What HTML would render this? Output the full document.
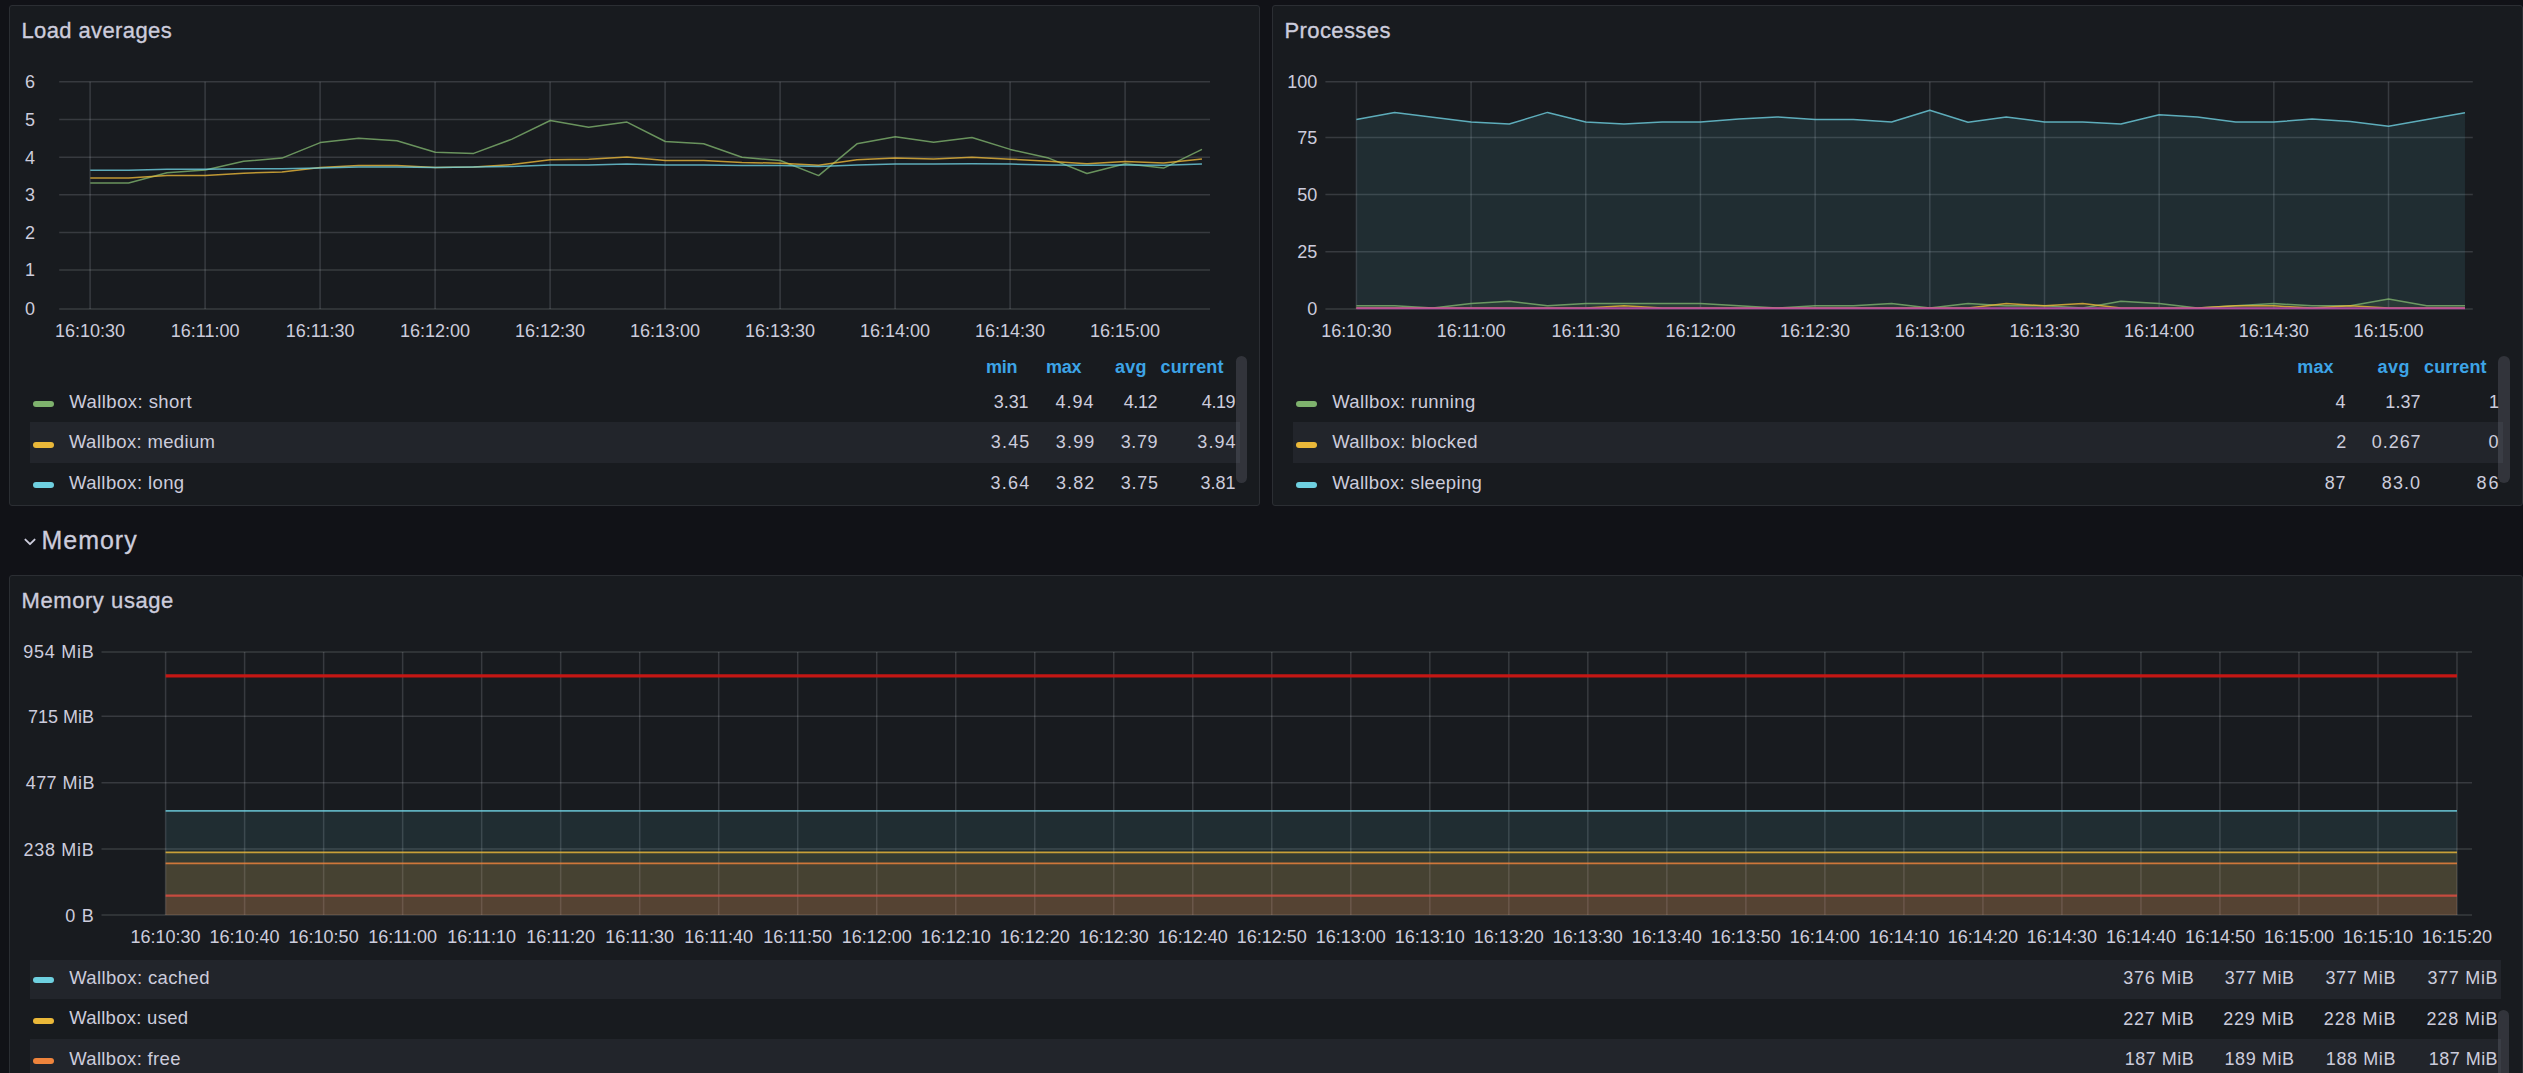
<!DOCTYPE html><html><head><meta charset="utf-8"><style>
html,body{margin:0;padding:0;}body{width:2523px;height:1073px;overflow:hidden;background:#111217;position:relative;font-family:"Liberation Sans", sans-serif;}
.t{position:absolute;white-space:nowrap;}
.p{position:absolute;background:#181b1f;border:1px solid #2b2e33;border-radius:3px;box-sizing:border-box;}
svg{position:absolute;left:0;top:0;}
</style></head><body>
<div class="p" style="left:9px;top:5px;width:1251px;height:501px;"></div>
<div class="p" style="left:1272px;top:5px;width:1251px;height:501px;"></div>
<div class="p" style="left:9px;top:575px;width:2514px;height:620px;"></div>
<svg width="2523" height="1073" viewBox="0 0 2523 1073"><line x1="59.2" y1="81.85" x2="1210" y2="81.85" stroke="rgba(235,240,250,0.15)" stroke-width="1.5"/><line x1="59.2" y1="119.50" x2="1210" y2="119.50" stroke="rgba(235,240,250,0.15)" stroke-width="1.5"/><line x1="59.2" y1="157.20" x2="1210" y2="157.20" stroke="rgba(235,240,250,0.15)" stroke-width="1.5"/><line x1="59.2" y1="194.80" x2="1210" y2="194.80" stroke="rgba(235,240,250,0.15)" stroke-width="1.5"/><line x1="59.2" y1="232.40" x2="1210" y2="232.40" stroke="rgba(235,240,250,0.15)" stroke-width="1.5"/><line x1="59.2" y1="270.00" x2="1210" y2="270.00" stroke="rgba(235,240,250,0.15)" stroke-width="1.5"/><line x1="59.2" y1="309.10" x2="1210" y2="309.10" stroke="rgba(235,240,250,0.15)" stroke-width="1.5"/><line x1="90.10" y1="81.85" x2="90.10" y2="309.10" stroke="rgba(235,240,250,0.15)" stroke-width="1.5"/><line x1="205.10" y1="81.85" x2="205.10" y2="309.10" stroke="rgba(235,240,250,0.15)" stroke-width="1.5"/><line x1="320.10" y1="81.85" x2="320.10" y2="309.10" stroke="rgba(235,240,250,0.15)" stroke-width="1.5"/><line x1="435.10" y1="81.85" x2="435.10" y2="309.10" stroke="rgba(235,240,250,0.15)" stroke-width="1.5"/><line x1="550.10" y1="81.85" x2="550.10" y2="309.10" stroke="rgba(235,240,250,0.15)" stroke-width="1.5"/><line x1="665.10" y1="81.85" x2="665.10" y2="309.10" stroke="rgba(235,240,250,0.15)" stroke-width="1.5"/><line x1="780.10" y1="81.85" x2="780.10" y2="309.10" stroke="rgba(235,240,250,0.15)" stroke-width="1.5"/><line x1="895.10" y1="81.85" x2="895.10" y2="309.10" stroke="rgba(235,240,250,0.15)" stroke-width="1.5"/><line x1="1010.10" y1="81.85" x2="1010.10" y2="309.10" stroke="rgba(235,240,250,0.15)" stroke-width="1.5"/><line x1="1125.10" y1="81.85" x2="1125.10" y2="309.10" stroke="rgba(235,240,250,0.15)" stroke-width="1.5"/><polyline fill="none" stroke="#7eb26d" stroke-width="1.5" stroke-opacity="0.8" stroke-linejoin="round" points="90.30,183.00 128.63,183.00 166.97,172.70 205.30,170.00 243.63,161.30 281.96,158.10 320.30,142.60 358.63,138.30 396.96,140.70 435.30,152.20 473.63,153.40 511.96,139.10 550.30,120.50 588.63,127.20 626.96,122.10 665.29,141.50 703.63,143.80 741.96,157.30 780.29,160.50 818.63,175.60 856.96,143.80 895.29,136.70 933.63,142.30 971.96,137.50 1010.29,149.40 1048.62,158.10 1086.96,173.50 1125.29,163.70 1163.62,168.10 1201.96,149.40"/><polyline fill="none" stroke="#eab839" stroke-width="1.5" stroke-opacity="0.8" stroke-linejoin="round" points="90.30,177.90 128.63,177.90 166.97,175.50 205.30,175.50 243.63,173.20 281.96,171.90 320.30,167.60 358.63,165.60 396.96,165.60 435.30,167.60 473.63,167.10 511.96,164.50 550.30,159.70 588.63,159.20 626.96,157.00 665.29,160.50 703.63,160.50 741.96,162.40 780.29,163.30 818.63,165.20 856.96,159.70 895.29,158.10 933.63,158.90 971.96,157.30 1010.29,159.20 1048.62,161.30 1086.96,163.70 1125.29,161.60 1163.62,162.90 1201.96,158.90"/><polyline fill="none" stroke="#6ed0e0" stroke-width="1.5" stroke-opacity="0.8" stroke-linejoin="round" points="90.30,170.30 128.63,170.30 166.97,169.20 205.30,169.20 243.63,168.70 281.96,168.70 320.30,167.90 358.63,167.10 396.96,167.10 435.30,167.60 473.63,167.10 511.96,166.50 550.30,164.90 588.63,164.90 626.96,164.00 665.29,164.90 703.63,164.90 741.96,165.60 780.29,165.60 818.63,166.50 856.96,164.90 895.29,164.00 933.63,164.00 971.96,163.70 1010.29,164.00 1048.62,164.90 1086.96,165.20 1125.29,164.90 1163.62,165.20 1201.96,164.00"/><line x1="1325.4" y1="81.80" x2="2472.8" y2="81.80" stroke="rgba(235,240,250,0.15)" stroke-width="1.5"/><line x1="1325.4" y1="137.40" x2="2472.8" y2="137.40" stroke="rgba(235,240,250,0.15)" stroke-width="1.5"/><line x1="1325.4" y1="194.50" x2="2472.8" y2="194.50" stroke="rgba(235,240,250,0.15)" stroke-width="1.5"/><line x1="1325.4" y1="251.80" x2="2472.8" y2="251.80" stroke="rgba(235,240,250,0.15)" stroke-width="1.5"/><line x1="1325.4" y1="308.90" x2="2472.8" y2="308.90" stroke="rgba(235,240,250,0.15)" stroke-width="1.5"/><line x1="1356.40" y1="81.80" x2="1356.40" y2="308.90" stroke="rgba(235,240,250,0.15)" stroke-width="1.5"/><line x1="1471.08" y1="81.80" x2="1471.08" y2="308.90" stroke="rgba(235,240,250,0.15)" stroke-width="1.5"/><line x1="1585.76" y1="81.80" x2="1585.76" y2="308.90" stroke="rgba(235,240,250,0.15)" stroke-width="1.5"/><line x1="1700.44" y1="81.80" x2="1700.44" y2="308.90" stroke="rgba(235,240,250,0.15)" stroke-width="1.5"/><line x1="1815.12" y1="81.80" x2="1815.12" y2="308.90" stroke="rgba(235,240,250,0.15)" stroke-width="1.5"/><line x1="1929.80" y1="81.80" x2="1929.80" y2="308.90" stroke="rgba(235,240,250,0.15)" stroke-width="1.5"/><line x1="2044.48" y1="81.80" x2="2044.48" y2="308.90" stroke="rgba(235,240,250,0.15)" stroke-width="1.5"/><line x1="2159.16" y1="81.80" x2="2159.16" y2="308.90" stroke="rgba(235,240,250,0.15)" stroke-width="1.5"/><line x1="2273.84" y1="81.80" x2="2273.84" y2="308.90" stroke="rgba(235,240,250,0.15)" stroke-width="1.5"/><line x1="2388.52" y1="81.80" x2="2388.52" y2="308.90" stroke="rgba(235,240,250,0.15)" stroke-width="1.5"/><polygon fill="#6ed0e0" fill-opacity="0.1" stroke="none" points="1356.40,309.00 1356.40,119.60 1394.63,112.40 1432.85,117.20 1471.08,122.00 1509.31,124.00 1547.54,112.40 1585.76,122.00 1623.99,124.00 1662.22,122.00 1700.44,122.00 1738.67,119.10 1776.90,116.90 1815.12,119.60 1853.35,119.60 1891.58,122.00 1929.81,110.20 1968.03,122.30 2006.26,116.90 2044.49,122.00 2082.71,122.00 2120.94,124.00 2159.17,114.80 2197.39,116.90 2235.62,122.00 2273.85,122.00 2312.07,119.10 2350.30,121.60 2388.53,126.20 2426.76,119.60 2464.98,112.80 2464.98,309.00"/><polygon fill="#7eb26d" fill-opacity="0.1" stroke="none" points="1356.40,309.00 1356.40,305.83 1394.63,305.83 1432.85,308.10 1471.08,303.56 1509.31,301.29 1547.54,305.83 1585.76,303.56 1623.99,303.56 1662.22,303.56 1700.44,303.56 1738.67,305.83 1776.90,308.10 1815.12,305.83 1853.35,305.83 1891.58,303.56 1929.81,308.10 1968.03,303.56 2006.26,305.83 2044.49,305.83 2082.71,308.10 2120.94,301.29 2159.17,303.56 2197.39,308.10 2235.62,305.83 2273.85,303.56 2312.07,305.83 2350.30,305.83 2388.53,299.02 2426.76,305.83 2464.98,305.83 2464.98,309.00"/><polygon fill="#eab839" fill-opacity="0.1" stroke="none" points="1356.40,309.00 1356.40,308.10 1394.63,308.10 1432.85,308.10 1471.08,308.10 1509.31,308.10 1547.54,308.10 1585.76,308.10 1623.99,305.83 1662.22,308.10 1700.44,308.10 1738.67,308.10 1776.90,308.10 1815.12,308.10 1853.35,308.10 1891.58,308.10 1929.81,308.10 1968.03,308.10 2006.26,303.56 2044.49,305.83 2082.71,303.56 2120.94,308.10 2159.17,308.10 2197.39,308.10 2235.62,305.83 2273.85,305.83 2312.07,308.10 2350.30,305.83 2388.53,308.10 2426.76,308.10 2464.98,308.10 2464.98,309.00"/><polyline fill="none" stroke="#6ed0e0" stroke-width="1.5" stroke-opacity="0.8" stroke-linejoin="round" points="1356.40,119.60 1394.63,112.40 1432.85,117.20 1471.08,122.00 1509.31,124.00 1547.54,112.40 1585.76,122.00 1623.99,124.00 1662.22,122.00 1700.44,122.00 1738.67,119.10 1776.90,116.90 1815.12,119.60 1853.35,119.60 1891.58,122.00 1929.81,110.20 1968.03,122.30 2006.26,116.90 2044.49,122.00 2082.71,122.00 2120.94,124.00 2159.17,114.80 2197.39,116.90 2235.62,122.00 2273.85,122.00 2312.07,119.10 2350.30,121.60 2388.53,126.20 2426.76,119.60 2464.98,112.80"/><polyline fill="none" stroke="#7eb26d" stroke-width="1.5" stroke-opacity="0.8" stroke-linejoin="round" points="1356.40,305.83 1394.63,305.83 1432.85,308.10 1471.08,303.56 1509.31,301.29 1547.54,305.83 1585.76,303.56 1623.99,303.56 1662.22,303.56 1700.44,303.56 1738.67,305.83 1776.90,308.10 1815.12,305.83 1853.35,305.83 1891.58,303.56 1929.81,308.10 1968.03,303.56 2006.26,305.83 2044.49,305.83 2082.71,308.10 2120.94,301.29 2159.17,303.56 2197.39,308.10 2235.62,305.83 2273.85,303.56 2312.07,305.83 2350.30,305.83 2388.53,299.02 2426.76,305.83 2464.98,305.83"/><polyline fill="none" stroke="#eab839" stroke-width="1.5" stroke-opacity="0.8" stroke-linejoin="round" points="1356.40,308.10 1394.63,308.10 1432.85,308.10 1471.08,308.10 1509.31,308.10 1547.54,308.10 1585.76,308.10 1623.99,305.83 1662.22,308.10 1700.44,308.10 1738.67,308.10 1776.90,308.10 1815.12,308.10 1853.35,308.10 1891.58,308.10 1929.81,308.10 1968.03,308.10 2006.26,303.56 2044.49,305.83 2082.71,303.56 2120.94,308.10 2159.17,308.10 2197.39,308.10 2235.62,305.83 2273.85,305.83 2312.07,308.10 2350.30,305.83 2388.53,308.10 2426.76,308.10 2464.98,308.10"/><line x1="1356.4" y1="308.2" x2="2464.98" y2="308.2" stroke="#ba43a9" stroke-width="2.0" stroke-opacity="0.85"/><line x1="101.5" y1="651.90" x2="2472" y2="651.90" stroke="rgba(235,240,250,0.15)" stroke-width="1.5"/><line x1="101.5" y1="716.30" x2="2472" y2="716.30" stroke="rgba(235,240,250,0.15)" stroke-width="1.5"/><line x1="101.5" y1="782.70" x2="2472" y2="782.70" stroke="rgba(235,240,250,0.15)" stroke-width="1.5"/><line x1="101.5" y1="849.00" x2="2472" y2="849.00" stroke="rgba(235,240,250,0.15)" stroke-width="1.5"/><line x1="101.5" y1="915.00" x2="2472" y2="915.00" stroke="rgba(235,240,250,0.15)" stroke-width="1.5"/><line x1="165.60" y1="651.90" x2="165.60" y2="915.00" stroke="rgba(235,240,250,0.15)" stroke-width="1.5"/><line x1="244.61" y1="651.90" x2="244.61" y2="915.00" stroke="rgba(235,240,250,0.15)" stroke-width="1.5"/><line x1="323.63" y1="651.90" x2="323.63" y2="915.00" stroke="rgba(235,240,250,0.15)" stroke-width="1.5"/><line x1="402.64" y1="651.90" x2="402.64" y2="915.00" stroke="rgba(235,240,250,0.15)" stroke-width="1.5"/><line x1="481.65" y1="651.90" x2="481.65" y2="915.00" stroke="rgba(235,240,250,0.15)" stroke-width="1.5"/><line x1="560.67" y1="651.90" x2="560.67" y2="915.00" stroke="rgba(235,240,250,0.15)" stroke-width="1.5"/><line x1="639.68" y1="651.90" x2="639.68" y2="915.00" stroke="rgba(235,240,250,0.15)" stroke-width="1.5"/><line x1="718.69" y1="651.90" x2="718.69" y2="915.00" stroke="rgba(235,240,250,0.15)" stroke-width="1.5"/><line x1="797.70" y1="651.90" x2="797.70" y2="915.00" stroke="rgba(235,240,250,0.15)" stroke-width="1.5"/><line x1="876.72" y1="651.90" x2="876.72" y2="915.00" stroke="rgba(235,240,250,0.15)" stroke-width="1.5"/><line x1="955.73" y1="651.90" x2="955.73" y2="915.00" stroke="rgba(235,240,250,0.15)" stroke-width="1.5"/><line x1="1034.74" y1="651.90" x2="1034.74" y2="915.00" stroke="rgba(235,240,250,0.15)" stroke-width="1.5"/><line x1="1113.76" y1="651.90" x2="1113.76" y2="915.00" stroke="rgba(235,240,250,0.15)" stroke-width="1.5"/><line x1="1192.77" y1="651.90" x2="1192.77" y2="915.00" stroke="rgba(235,240,250,0.15)" stroke-width="1.5"/><line x1="1271.78" y1="651.90" x2="1271.78" y2="915.00" stroke="rgba(235,240,250,0.15)" stroke-width="1.5"/><line x1="1350.80" y1="651.90" x2="1350.80" y2="915.00" stroke="rgba(235,240,250,0.15)" stroke-width="1.5"/><line x1="1429.81" y1="651.90" x2="1429.81" y2="915.00" stroke="rgba(235,240,250,0.15)" stroke-width="1.5"/><line x1="1508.82" y1="651.90" x2="1508.82" y2="915.00" stroke="rgba(235,240,250,0.15)" stroke-width="1.5"/><line x1="1587.83" y1="651.90" x2="1587.83" y2="915.00" stroke="rgba(235,240,250,0.15)" stroke-width="1.5"/><line x1="1666.85" y1="651.90" x2="1666.85" y2="915.00" stroke="rgba(235,240,250,0.15)" stroke-width="1.5"/><line x1="1745.86" y1="651.90" x2="1745.86" y2="915.00" stroke="rgba(235,240,250,0.15)" stroke-width="1.5"/><line x1="1824.87" y1="651.90" x2="1824.87" y2="915.00" stroke="rgba(235,240,250,0.15)" stroke-width="1.5"/><line x1="1903.89" y1="651.90" x2="1903.89" y2="915.00" stroke="rgba(235,240,250,0.15)" stroke-width="1.5"/><line x1="1982.90" y1="651.90" x2="1982.90" y2="915.00" stroke="rgba(235,240,250,0.15)" stroke-width="1.5"/><line x1="2061.91" y1="651.90" x2="2061.91" y2="915.00" stroke="rgba(235,240,250,0.15)" stroke-width="1.5"/><line x1="2140.93" y1="651.90" x2="2140.93" y2="915.00" stroke="rgba(235,240,250,0.15)" stroke-width="1.5"/><line x1="2219.94" y1="651.90" x2="2219.94" y2="915.00" stroke="rgba(235,240,250,0.15)" stroke-width="1.5"/><line x1="2298.95" y1="651.90" x2="2298.95" y2="915.00" stroke="rgba(235,240,250,0.15)" stroke-width="1.5"/><line x1="2377.96" y1="651.90" x2="2377.96" y2="915.00" stroke="rgba(235,240,250,0.15)" stroke-width="1.5"/><line x1="2456.98" y1="651.90" x2="2456.98" y2="915.00" stroke="rgba(235,240,250,0.15)" stroke-width="1.5"/><rect x="165.6" y="810.9" width="2291.38" height="104.10" fill="#6ed0e0" fill-opacity="0.1"/><rect x="165.6" y="852.3" width="2291.38" height="62.70" fill="#eab839" fill-opacity="0.1"/><rect x="165.6" y="863.3" width="2291.38" height="51.70" fill="#ef843c" fill-opacity="0.1"/><rect x="165.6" y="895.7" width="2291.38" height="19.30" fill="#e24d42" fill-opacity="0.1"/><line x1="165.6" y1="810.9" x2="2456.98" y2="810.9" stroke="#6ed0e0" stroke-width="1.8" stroke-opacity="0.82"/><line x1="165.6" y1="852.3" x2="2456.98" y2="852.3" stroke="#eab839" stroke-width="1.8" stroke-opacity="0.82"/><line x1="165.6" y1="863.3" x2="2456.98" y2="863.3" stroke="#ef843c" stroke-width="1.8" stroke-opacity="0.82"/><line x1="165.6" y1="895.7" x2="2456.98" y2="895.7" stroke="#e24d42" stroke-width="2.2" stroke-opacity="0.82"/><line x1="165.6" y1="675.8" x2="2456.98" y2="675.8" stroke="#c41714" stroke-width="3.2"/></svg>
<div class="t" id="t_load" style="top:20.18px;font-size:22px;line-height:22px;color:#ccccdc;letter-spacing:0.385px;-webkit-text-stroke:0.35px #ccccdc;left:21.50px;">Load averages</div>
<div class="t" id="t_proc" style="top:19.98px;font-size:22px;line-height:22px;color:#ccccdc;letter-spacing:0.400px;-webkit-text-stroke:0.35px #ccccdc;left:1284.50px;">Processes</div>
<div class="t" id="t_mem" style="top:590.18px;font-size:22px;line-height:22px;color:#ccccdc;letter-spacing:0.561px;-webkit-text-stroke:0.35px #ccccdc;left:21.60px;">Memory usage</div>
<div class="t" style="top:73.21px;font-size:18px;line-height:18px;color:#ccccdc;right:2488.00px;">6</div>
<div class="t" style="top:110.86px;font-size:18px;line-height:18px;color:#ccccdc;right:2488.00px;">5</div>
<div class="t" style="top:148.56px;font-size:18px;line-height:18px;color:#ccccdc;right:2488.00px;">4</div>
<div class="t" style="top:186.16px;font-size:18px;line-height:18px;color:#ccccdc;right:2488.00px;">3</div>
<div class="t" style="top:223.76px;font-size:18px;line-height:18px;color:#ccccdc;right:2488.00px;">2</div>
<div class="t" style="top:261.36px;font-size:18px;line-height:18px;color:#ccccdc;right:2488.00px;">1</div>
<div class="t" style="top:300.46px;font-size:18px;line-height:18px;color:#ccccdc;right:2488.00px;">0</div>
<div class="t" style="top:73.16px;font-size:18px;line-height:18px;color:#ccccdc;right:1205.80px;">100</div>
<div class="t" style="top:128.76px;font-size:18px;line-height:18px;color:#ccccdc;right:1205.80px;">75</div>
<div class="t" style="top:185.86px;font-size:18px;line-height:18px;color:#ccccdc;right:1205.80px;">50</div>
<div class="t" style="top:243.16px;font-size:18px;line-height:18px;color:#ccccdc;right:1205.80px;">25</div>
<div class="t" style="top:300.26px;font-size:18px;line-height:18px;color:#ccccdc;right:1205.80px;">0</div>
<div class="t" id="ym0" style="top:643.26px;font-size:18px;line-height:18px;color:#ccccdc;letter-spacing:0.733px;right:2428.47px;">954 MiB</div>
<div class="t" id="ym1" style="top:707.86px;font-size:18px;line-height:18px;color:#ccccdc;letter-spacing:0.001px;right:2429.00px;">715 MiB</div>
<div class="t" id="ym2" style="top:774.46px;font-size:18px;line-height:18px;color:#ccccdc;letter-spacing:0.450px;right:2428.15px;">477 MiB</div>
<div class="t" id="ym3" style="top:840.96px;font-size:18px;line-height:18px;color:#ccccdc;letter-spacing:0.718px;right:2428.48px;">238 MiB</div>
<div class="t" id="ym4" style="top:907.16px;font-size:18px;line-height:18px;color:#ccccdc;letter-spacing:0.750px;right:2428.45px;">0 B</div>
<div class="t" style="top:321.76px;font-size:18px;line-height:18px;color:#ccccdc;left:-109.90px;width:400px;text-align:center;">16:10:30</div>
<div class="t" style="top:321.76px;font-size:18px;line-height:18px;color:#ccccdc;left:1156.40px;width:400px;text-align:center;">16:10:30</div>
<div class="t" style="top:321.76px;font-size:18px;line-height:18px;color:#ccccdc;left:5.10px;width:400px;text-align:center;">16:11:00</div>
<div class="t" style="top:321.76px;font-size:18px;line-height:18px;color:#ccccdc;left:1271.08px;width:400px;text-align:center;">16:11:00</div>
<div class="t" style="top:321.76px;font-size:18px;line-height:18px;color:#ccccdc;left:120.10px;width:400px;text-align:center;">16:11:30</div>
<div class="t" style="top:321.76px;font-size:18px;line-height:18px;color:#ccccdc;left:1385.76px;width:400px;text-align:center;">16:11:30</div>
<div class="t" style="top:321.76px;font-size:18px;line-height:18px;color:#ccccdc;left:235.10px;width:400px;text-align:center;">16:12:00</div>
<div class="t" style="top:321.76px;font-size:18px;line-height:18px;color:#ccccdc;left:1500.44px;width:400px;text-align:center;">16:12:00</div>
<div class="t" style="top:321.76px;font-size:18px;line-height:18px;color:#ccccdc;left:350.10px;width:400px;text-align:center;">16:12:30</div>
<div class="t" style="top:321.76px;font-size:18px;line-height:18px;color:#ccccdc;left:1615.12px;width:400px;text-align:center;">16:12:30</div>
<div class="t" style="top:321.76px;font-size:18px;line-height:18px;color:#ccccdc;left:465.10px;width:400px;text-align:center;">16:13:00</div>
<div class="t" style="top:321.76px;font-size:18px;line-height:18px;color:#ccccdc;left:1729.80px;width:400px;text-align:center;">16:13:00</div>
<div class="t" style="top:321.76px;font-size:18px;line-height:18px;color:#ccccdc;left:580.10px;width:400px;text-align:center;">16:13:30</div>
<div class="t" style="top:321.76px;font-size:18px;line-height:18px;color:#ccccdc;left:1844.48px;width:400px;text-align:center;">16:13:30</div>
<div class="t" style="top:321.76px;font-size:18px;line-height:18px;color:#ccccdc;left:695.10px;width:400px;text-align:center;">16:14:00</div>
<div class="t" style="top:321.76px;font-size:18px;line-height:18px;color:#ccccdc;left:1959.16px;width:400px;text-align:center;">16:14:00</div>
<div class="t" style="top:321.76px;font-size:18px;line-height:18px;color:#ccccdc;left:810.10px;width:400px;text-align:center;">16:14:30</div>
<div class="t" style="top:321.76px;font-size:18px;line-height:18px;color:#ccccdc;left:2073.84px;width:400px;text-align:center;">16:14:30</div>
<div class="t" style="top:321.76px;font-size:18px;line-height:18px;color:#ccccdc;left:925.10px;width:400px;text-align:center;">16:15:00</div>
<div class="t" style="top:321.76px;font-size:18px;line-height:18px;color:#ccccdc;left:2188.52px;width:400px;text-align:center;">16:15:00</div>
<div class="t" style="top:928.06px;font-size:18px;line-height:18px;color:#ccccdc;left:-34.40px;width:400px;text-align:center;">16:10:30</div>
<div class="t" style="top:928.06px;font-size:18px;line-height:18px;color:#ccccdc;left:44.61px;width:400px;text-align:center;">16:10:40</div>
<div class="t" style="top:928.06px;font-size:18px;line-height:18px;color:#ccccdc;left:123.63px;width:400px;text-align:center;">16:10:50</div>
<div class="t" style="top:928.06px;font-size:18px;line-height:18px;color:#ccccdc;left:202.64px;width:400px;text-align:center;">16:11:00</div>
<div class="t" style="top:928.06px;font-size:18px;line-height:18px;color:#ccccdc;left:281.65px;width:400px;text-align:center;">16:11:10</div>
<div class="t" style="top:928.06px;font-size:18px;line-height:18px;color:#ccccdc;left:360.67px;width:400px;text-align:center;">16:11:20</div>
<div class="t" style="top:928.06px;font-size:18px;line-height:18px;color:#ccccdc;left:439.68px;width:400px;text-align:center;">16:11:30</div>
<div class="t" style="top:928.06px;font-size:18px;line-height:18px;color:#ccccdc;left:518.69px;width:400px;text-align:center;">16:11:40</div>
<div class="t" style="top:928.06px;font-size:18px;line-height:18px;color:#ccccdc;left:597.70px;width:400px;text-align:center;">16:11:50</div>
<div class="t" style="top:928.06px;font-size:18px;line-height:18px;color:#ccccdc;left:676.72px;width:400px;text-align:center;">16:12:00</div>
<div class="t" style="top:928.06px;font-size:18px;line-height:18px;color:#ccccdc;left:755.73px;width:400px;text-align:center;">16:12:10</div>
<div class="t" style="top:928.06px;font-size:18px;line-height:18px;color:#ccccdc;left:834.74px;width:400px;text-align:center;">16:12:20</div>
<div class="t" style="top:928.06px;font-size:18px;line-height:18px;color:#ccccdc;left:913.76px;width:400px;text-align:center;">16:12:30</div>
<div class="t" style="top:928.06px;font-size:18px;line-height:18px;color:#ccccdc;left:992.77px;width:400px;text-align:center;">16:12:40</div>
<div class="t" style="top:928.06px;font-size:18px;line-height:18px;color:#ccccdc;left:1071.78px;width:400px;text-align:center;">16:12:50</div>
<div class="t" style="top:928.06px;font-size:18px;line-height:18px;color:#ccccdc;left:1150.80px;width:400px;text-align:center;">16:13:00</div>
<div class="t" style="top:928.06px;font-size:18px;line-height:18px;color:#ccccdc;left:1229.81px;width:400px;text-align:center;">16:13:10</div>
<div class="t" style="top:928.06px;font-size:18px;line-height:18px;color:#ccccdc;left:1308.82px;width:400px;text-align:center;">16:13:20</div>
<div class="t" style="top:928.06px;font-size:18px;line-height:18px;color:#ccccdc;left:1387.83px;width:400px;text-align:center;">16:13:30</div>
<div class="t" style="top:928.06px;font-size:18px;line-height:18px;color:#ccccdc;left:1466.85px;width:400px;text-align:center;">16:13:40</div>
<div class="t" style="top:928.06px;font-size:18px;line-height:18px;color:#ccccdc;left:1545.86px;width:400px;text-align:center;">16:13:50</div>
<div class="t" style="top:928.06px;font-size:18px;line-height:18px;color:#ccccdc;left:1624.87px;width:400px;text-align:center;">16:14:00</div>
<div class="t" style="top:928.06px;font-size:18px;line-height:18px;color:#ccccdc;left:1703.89px;width:400px;text-align:center;">16:14:10</div>
<div class="t" style="top:928.06px;font-size:18px;line-height:18px;color:#ccccdc;left:1782.90px;width:400px;text-align:center;">16:14:20</div>
<div class="t" style="top:928.06px;font-size:18px;line-height:18px;color:#ccccdc;left:1861.91px;width:400px;text-align:center;">16:14:30</div>
<div class="t" style="top:928.06px;font-size:18px;line-height:18px;color:#ccccdc;left:1940.93px;width:400px;text-align:center;">16:14:40</div>
<div class="t" style="top:928.06px;font-size:18px;line-height:18px;color:#ccccdc;left:2019.94px;width:400px;text-align:center;">16:14:50</div>
<div class="t" style="top:928.06px;font-size:18px;line-height:18px;color:#ccccdc;left:2098.95px;width:400px;text-align:center;">16:15:00</div>
<div class="t" style="top:928.06px;font-size:18px;line-height:18px;color:#ccccdc;left:2177.96px;width:400px;text-align:center;">16:15:10</div>
<div class="t" style="top:928.06px;font-size:18px;line-height:18px;color:#ccccdc;left:2256.98px;width:400px;text-align:center;">16:15:20</div>
<div style="position:absolute;left:30px;top:422px;width:1210px;height:41px;background:#22252b;"></div>
<div class="t" id="h1_0" style="top:357.76px;font-size:18px;line-height:18px;color:#3da4e6;font-weight:bold;letter-spacing:-0.250px;right:1505.75px;">min</div>
<div class="t" id="h1_1" style="top:357.76px;font-size:18px;line-height:18px;color:#3da4e6;font-weight:bold;letter-spacing:-0.250px;right:1441.75px;">max</div>
<div class="t" id="h1_2" style="top:357.76px;font-size:18px;line-height:18px;color:#3da4e6;font-weight:bold;letter-spacing:0.200px;right:1376.40px;">avg</div>
<div class="t" id="h1_3" style="top:357.76px;font-size:18px;line-height:18px;color:#3da4e6;font-weight:bold;letter-spacing:0.167px;right:1299.33px;">current</div>
<div style="position:absolute;left:33px;top:401.0px;width:21px;height:6px;background:#7eb26d;border-radius:3px;"></div>
<div class="t" id="n1_0" style="top:392.74px;font-size:18.5px;line-height:18.5px;color:#ccccdc;letter-spacing:0.451px;left:69.20px;">Wallbox: short</div>
<div class="t" id="v1_0_0" style="top:392.56px;font-size:18px;line-height:18px;color:#ccccdc;letter-spacing:-0.099px;right:1494.50px;">3.31</div>
<div class="t" id="v1_0_1" style="top:392.56px;font-size:18px;line-height:18px;color:#ccccdc;letter-spacing:1.000px;right:1428.40px;">4.94</div>
<div class="t" id="v1_0_2" style="top:392.56px;font-size:18px;line-height:18px;color:#ccccdc;letter-spacing:-0.369px;right:1365.77px;">4.12</div>
<div class="t" id="v1_0_3" style="top:392.56px;font-size:18px;line-height:18px;color:#ccccdc;letter-spacing:-0.399px;right:1287.80px;">4.19</div>
<div style="position:absolute;left:33px;top:441.6px;width:21px;height:6px;background:#eab839;border-radius:3px;"></div>
<div class="t" id="n1_1" style="top:433.34px;font-size:18.5px;line-height:18.5px;color:#ccccdc;letter-spacing:0.341px;left:69.00px;">Wallbox: medium</div>
<div class="t" id="v1_1_0" style="top:433.16px;font-size:18px;line-height:18px;color:#ccccdc;letter-spacing:1.135px;right:1492.57px;">3.45</div>
<div class="t" id="v1_1_1" style="top:433.16px;font-size:18px;line-height:18px;color:#ccccdc;letter-spacing:1.167px;right:1427.53px;">3.99</div>
<div class="t" id="v1_1_2" style="top:433.16px;font-size:18px;line-height:18px;color:#ccccdc;letter-spacing:0.631px;right:1364.77px;">3.79</div>
<div class="t" id="v1_1_3" style="top:433.16px;font-size:18px;line-height:18px;color:#ccccdc;letter-spacing:1.099px;right:1286.30px;">3.94</div>
<div style="position:absolute;left:33px;top:482.2px;width:21px;height:6px;background:#6ed0e0;border-radius:3px;"></div>
<div class="t" id="n1_2" style="top:473.94px;font-size:18.5px;line-height:18.5px;color:#ccccdc;letter-spacing:0.398px;left:69.00px;">Wallbox: long</div>
<div class="t" id="v1_2_0" style="top:473.76px;font-size:18px;line-height:18px;color:#ccccdc;letter-spacing:1.234px;right:1492.47px;">3.64</div>
<div class="t" id="v1_2_1" style="top:473.76px;font-size:18px;line-height:18px;color:#ccccdc;letter-spacing:1.066px;right:1427.63px;">3.82</div>
<div class="t" id="v1_2_2" style="top:473.76px;font-size:18px;line-height:18px;color:#ccccdc;letter-spacing:0.802px;right:1364.10px;">3.75</div>
<div class="t" id="v1_2_3" style="top:473.76px;font-size:18px;line-height:18px;color:#ccccdc;right:1287.40px;">3.81</div>
<div style="position:absolute;left:1235.5px;top:356px;width:11.5px;height:127px;background:rgba(204,204,220,0.15);border-radius:6px;"></div>
<div style="position:absolute;left:1293px;top:422px;width:1210px;height:41px;background:#22252b;"></div>
<div class="t" id="h2_0" style="top:357.76px;font-size:18px;line-height:18px;color:#3da4e6;font-weight:bold;letter-spacing:0.100px;right:189.40px;">max</div>
<div class="t" id="h2_1" style="top:357.76px;font-size:18px;line-height:18px;color:#3da4e6;font-weight:bold;letter-spacing:0.450px;right:113.05px;">avg</div>
<div class="t" id="h2_2" style="top:357.76px;font-size:18px;line-height:18px;color:#3da4e6;font-weight:bold;letter-spacing:0.065px;right:36.44px;">current</div>
<div style="position:absolute;left:1296px;top:401.0px;width:21px;height:6px;background:#7eb26d;border-radius:3px;"></div>
<div class="t" id="n2_0" style="top:392.74px;font-size:18.5px;line-height:18.5px;color:#ccccdc;letter-spacing:0.392px;left:1332.20px;">Wallbox: running</div>
<div class="t" id="v2_0_0" style="top:392.56px;font-size:18px;line-height:18px;color:#ccccdc;right:177.40px;">4</div>
<div class="t" id="v2_0_1" style="top:392.56px;font-size:18px;line-height:18px;color:#ccccdc;letter-spacing:0.067px;right:102.33px;">1.37</div>
<div class="t" id="v2_0_2" style="top:392.56px;font-size:18px;line-height:18px;color:#ccccdc;right:24.10px;">1</div>
<div style="position:absolute;left:1296px;top:441.6px;width:21px;height:6px;background:#eab839;border-radius:3px;"></div>
<div class="t" id="n2_1" style="top:433.34px;font-size:18.5px;line-height:18.5px;color:#ccccdc;letter-spacing:0.408px;left:1332.20px;">Wallbox: blocked</div>
<div class="t" id="v2_1_0" style="top:433.16px;font-size:18px;line-height:18px;color:#ccccdc;right:176.80px;">2</div>
<div class="t" id="v2_1_1" style="top:433.16px;font-size:18px;line-height:18px;color:#ccccdc;letter-spacing:0.950px;right:101.45px;">0.267</div>
<div class="t" id="v2_1_2" style="top:433.16px;font-size:18px;line-height:18px;color:#ccccdc;right:24.40px;">0</div>
<div style="position:absolute;left:1296px;top:482.2px;width:21px;height:6px;background:#6ed0e0;border-radius:3px;"></div>
<div class="t" id="n2_2" style="top:473.94px;font-size:18.5px;line-height:18.5px;color:#ccccdc;letter-spacing:0.332px;left:1332.20px;">Wallbox: sleeping</div>
<div class="t" id="v2_2_0" style="top:473.76px;font-size:18px;line-height:18px;color:#ccccdc;letter-spacing:0.900px;right:176.50px;">87</div>
<div class="t" id="v2_2_1" style="top:473.76px;font-size:18px;line-height:18px;color:#ccccdc;letter-spacing:1.099px;right:101.80px;">83.0</div>
<div class="t" id="v2_2_2" style="top:473.76px;font-size:18px;line-height:18px;color:#ccccdc;letter-spacing:2.000px;right:22.40px;">86</div>
<div style="position:absolute;left:2498px;top:356px;width:11.5px;height:127px;background:rgba(204,204,220,0.15);border-radius:6px;"></div>
<svg style="left:0;top:0" width="60" height="600"><polyline points="25.4,539.6 30.0,544.2 34.6,539.6" fill="none" stroke="#ccccdc" stroke-width="1.9" stroke-linecap="round" stroke-linejoin="round"/></svg>
<div class="t" id="t_row" style="top:527.74px;font-size:25px;line-height:25px;color:#ccccdc;letter-spacing:0.970px;-webkit-text-stroke:0.3px #ccccdc;left:41.50px;">Memory</div>
<div style="position:absolute;left:30px;top:960px;width:2471px;height:39px;background:#22252b;"></div>
<div style="position:absolute;left:30px;top:1039px;width:2471px;height:40px;background:#22252b;"></div>
<div style="position:absolute;left:33px;top:977.0px;width:21px;height:6px;background:#6ed0e0;border-radius:3px;"></div>
<div class="t" id="n3_0" style="top:968.64px;font-size:18.5px;line-height:18.5px;color:#ccccdc;letter-spacing:0.370px;left:69.20px;">Wallbox: cached</div>
<div class="t" id="v3_0_0" style="top:969.16px;font-size:18px;line-height:18px;color:#ccccdc;letter-spacing:0.717px;right:328.58px;">376 MiB</div>
<div class="t" id="v3_0_1" style="top:969.16px;font-size:18px;line-height:18px;color:#ccccdc;letter-spacing:0.550px;right:228.35px;">377 MiB</div>
<div class="t" id="v3_0_2" style="top:969.16px;font-size:18px;line-height:18px;color:#ccccdc;letter-spacing:0.667px;right:126.93px;">377 MiB</div>
<div class="t" id="v3_0_3" style="top:969.16px;font-size:18px;line-height:18px;color:#ccccdc;letter-spacing:0.700px;right:24.70px;">377 MiB</div>
<div style="position:absolute;left:33px;top:1017.6px;width:21px;height:6px;background:#eab839;border-radius:3px;"></div>
<div class="t" id="n3_1" style="top:1009.14px;font-size:18.5px;line-height:18.5px;color:#ccccdc;letter-spacing:0.281px;left:69.20px;">Wallbox: used</div>
<div class="t" id="v3_1_0" style="top:1009.66px;font-size:18px;line-height:18px;color:#ccccdc;letter-spacing:0.717px;right:328.58px;">227 MiB</div>
<div class="t" id="v3_1_1" style="top:1009.66px;font-size:18px;line-height:18px;color:#ccccdc;letter-spacing:0.817px;right:228.08px;">229 MiB</div>
<div class="t" id="v3_1_2" style="top:1009.66px;font-size:18px;line-height:18px;color:#ccccdc;letter-spacing:0.933px;right:126.67px;">228 MiB</div>
<div class="t" id="v3_1_3" style="top:1009.66px;font-size:18px;line-height:18px;color:#ccccdc;letter-spacing:0.867px;right:24.53px;">228 MiB</div>
<div style="position:absolute;left:33px;top:1058.2px;width:21px;height:6px;background:#ef843c;border-radius:3px;"></div>
<div class="t" id="n3_2" style="top:1049.64px;font-size:18.5px;line-height:18.5px;color:#ccccdc;letter-spacing:0.335px;left:69.20px;">Wallbox: free</div>
<div class="t" id="v3_2_0" style="top:1050.16px;font-size:18px;line-height:18px;color:#ccccdc;letter-spacing:0.483px;right:328.82px;">187 MiB</div>
<div class="t" id="v3_2_1" style="top:1050.16px;font-size:18px;line-height:18px;color:#ccccdc;letter-spacing:0.616px;right:228.28px;">189 MiB</div>
<div class="t" id="v3_2_2" style="top:1050.16px;font-size:18px;line-height:18px;color:#ccccdc;letter-spacing:0.600px;right:127.00px;">188 MiB</div>
<div class="t" id="v3_2_3" style="top:1050.16px;font-size:18px;line-height:18px;color:#ccccdc;letter-spacing:0.467px;right:24.93px;">187 MiB</div>
<div style="position:absolute;left:2497.7px;top:1010px;width:11px;height:120px;background:rgba(204,204,220,0.15);border-radius:6px;"></div>
</body></html>
